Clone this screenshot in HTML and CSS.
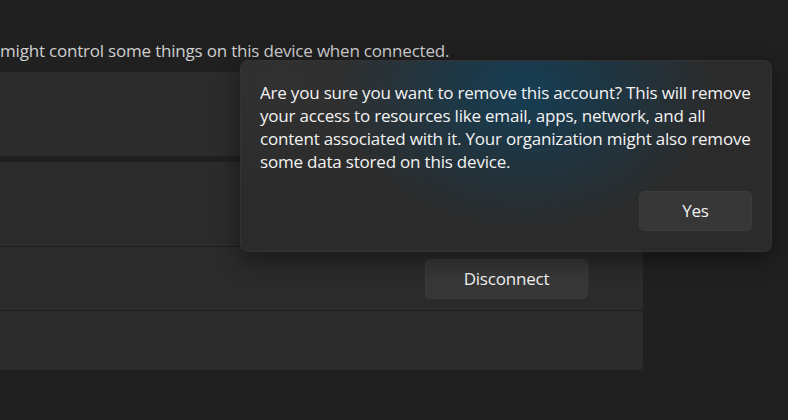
FILE: index.html
```html
<!DOCTYPE html>
<html lang="en">
<head>
<meta charset="utf-8">
<title>Remove account</title>
<link rel="stylesheet" href="styles.css">
</head>
<body>
<div class="page">
  <p class="desc">might control some things on this device when connected.</p>
  <div class="card card-top"></div>
  <div class="card card-main">
    <div class="row row-a"></div>
    <div class="row row-b"><button class="btn btn-disconnect">Disconnect</button></div>
    <div class="row row-c"></div>
  </div>
</div>
<div class="flyout">
  <p class="flyout-text">Are you sure you want to remove this account? This will remove your access to resources like email, apps, network, and all content associated with it. Your organization might also remove some data stored on this device.</p>
  <div class="flyout-actions"><button class="btn btn-yes">Yes</button></div>
</div>
</body>
</html>
```
FILE: styles.css
```css
html, body {
  margin: 0;
  padding: 0;
  background: #202020;
  width: 788px;
  height: 420px;
  overflow: hidden;
  font-family: "Open Sans", "Noto Sans", sans-serif;
}
.page {
  margin-left: -60px;
  width: 703px;
  padding-top: 39px;
  display: flex;
  flex-direction: column;
}
.desc {
  margin: 0 0 10px 60px;
  font-size: 17px;
  line-height: 23px;
  color: #cfcfcf;
  white-space: nowrap;
  letter-spacing: -0.2px;
}
.card {
  background: #2b2b2b;
  border-radius: 0 4px 4px 0;
}
.card-top {
  height: 84px;
  margin-bottom: 6px;
}
.card-main {
  display: flex;
  flex-direction: column;
}
.row {
  display: flex;
  align-items: center;
  justify-content: flex-end;
}
.row-a { height: 84px; border-bottom: 1px solid #1e1e1e; }
.row-b { height: 63px; border-bottom: 1px solid #1e1e1e; padding-right: 55px; }
.row-c { height: 59px; }
.btn {
  font-family: inherit;
  font-size: 17px;
  letter-spacing: -0.2px;
  color: #f2f2f2;
  background: #373737;
  border: 1px solid #3b3b3b;
  border-radius: 5px;
  height: 40px;
  padding: 0 0 1px 0;
  cursor: pointer;
}
.btn-disconnect { width: 163px; }
.flyout {
  position: absolute;
  left: 240px;
  top: 60px;
  width: 532px;
  height: 192px;
  box-sizing: border-box;
  padding: 20px 19px 20px 19px;
  border-radius: 8px;
  border: 1px solid #333333;
  background:
    radial-gradient(ellipse 190px 140px at 285px 30px, rgba(14, 68, 98, 0.75), rgba(14, 68, 98, 0) 100%),
    radial-gradient(ellipse 260px 120px at 40px 20px, rgba(60, 60, 60, 0.35), rgba(60, 60, 60, 0) 100%),
    #2b2b2b;
  box-shadow: 0 8px 24px rgba(0, 0, 0, 0.45);
  display: flex;
  flex-direction: column;
  justify-content: space-between;
}
.flyout-text {
  margin: 0;
  font-size: 17px;
  line-height: 23px;
  color: #f3f3f3;
  letter-spacing: -0.2px;
}
.flyout-actions {
  display: flex;
  justify-content: flex-end;
}
.btn-yes { width: 113px; }
```
